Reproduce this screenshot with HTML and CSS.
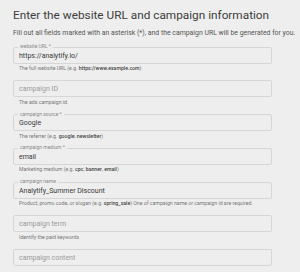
FILE: index.html
```html
<!DOCTYPE html>
<html>
<head>
    <link rel="stylesheet" href="styles.css">
</head>
<body>
    <div class="form_wrap">
        <h2 class="title">Enter the website URL and campaign information</h2>
        <p class="intro">Fill out all fields marked with an asterisk (*), and the campaign URL will be generated for you.</p>

        <!-- url fields -->
        <div class="field">
            <div class="box">
                <span class="label">website URL *</span>
                <input type="text" class="text_input" value="https://analytify.io/">
            </div>
            <p class="hint">The full website URL (e.g. <b>https://www.example.com</b>)</p>
        </div>

        <div class="field">
            <div class="box">
                <input type="text" class="text_input" placeholder="campaign ID">
            </div>
            <p class="hint">The ads campaign id.</p>
        </div>

        <div class="field">
            <div class="box">
                <span class="label">campaign source *</span>
                <input type="text" class="text_input" value="Google">
            </div>
            <p class="hint">The referrer (e.g. <b>google</b>, <b>newsletter</b>)</p>
        </div>

        <div class="field">
            <div class="box">
                <span class="label">campaign medium *</span>
                <input type="text" class="text_input" value="email">
            </div>
            <p class="hint">Marketing medium (e.g. <b>cpc</b>, <b>banner</b>, <b>email</b>)</p>
        </div>

        <div class="field">
            <div class="box">
                <span class="label">campaign name</span>
                <input type="text" class="text_input" value="Analytify_Summer Discount">
            </div>
            <p class="hint">Product, promo code, or slogan (e.g. <b>spring_sale</b>) One of campaign name or campaign id are required.</p>
        </div>

        <div class="field">
            <div class="box">
                <input type="text" class="text_input" placeholder="campaign term">
            </div>
            <p class="hint">Identify the paid keywords</p>
        </div>

        <div class="field">
            <div class="box">
                <input type="text" class="text_input" placeholder="campaign content">
            </div>
        </div>
    </div>
</body>
</html>
```

FILE: styles.css
```css
body {
    margin: 0;
    font-family: Roboto, 'Liberation Sans', sans-serif;
    background-color: #eeeeee;
    color: #333;
    overflow: hidden;
}

.form_wrap {
    padding: 8px 28px 0 13px;
}

.title {
    margin: 0;
    font-size: 11.8px;
    line-height: 15px;
    font-weight: 400;
    color: #3d3d3d;
    white-space: nowrap;
}

.intro {
    margin: 6px 0 0 0;
    font-size: 6.9px;
    line-height: 8px;
    color: #555;
    white-space: nowrap;
}

.field {
    margin-top: 9.5px;
    margin-bottom: -0.6px;
}

.field + .field {
    margin-top: 8.9px;
}

/* outlined input with notched label */
.box {
    position: relative;
}

.label {
    position: absolute;
    top: -3.5px;
    left: 5px;
    padding: 0 2px;
    font-size: 5px;
    line-height: 6px;
    color: #8a8a8a;
    background-color: #eeeeee;
}

.text_input {
    display: block;
    box-sizing: border-box;
    width: 100%;
    height: 17px;
    margin: 0;
    padding: 1px 5px 0 5px;
    font-family: Roboto, 'Liberation Sans', sans-serif;
    font-size: 7px;
    color: #3a3a3a;
    background-color: transparent;
    border: 1px solid #d6d6d6;
    border-radius: 2px;
    outline: none;
}

.text_input::placeholder {
    color: #9a9a9a;
}

.hint {
    margin: 1.5px 0 0 6px;
    font-size: 5.2px;
    line-height: 7px;
    color: #777;
    white-space: nowrap;
}

.hint b {
    font-weight: 500;
    color: #444;
}
```
